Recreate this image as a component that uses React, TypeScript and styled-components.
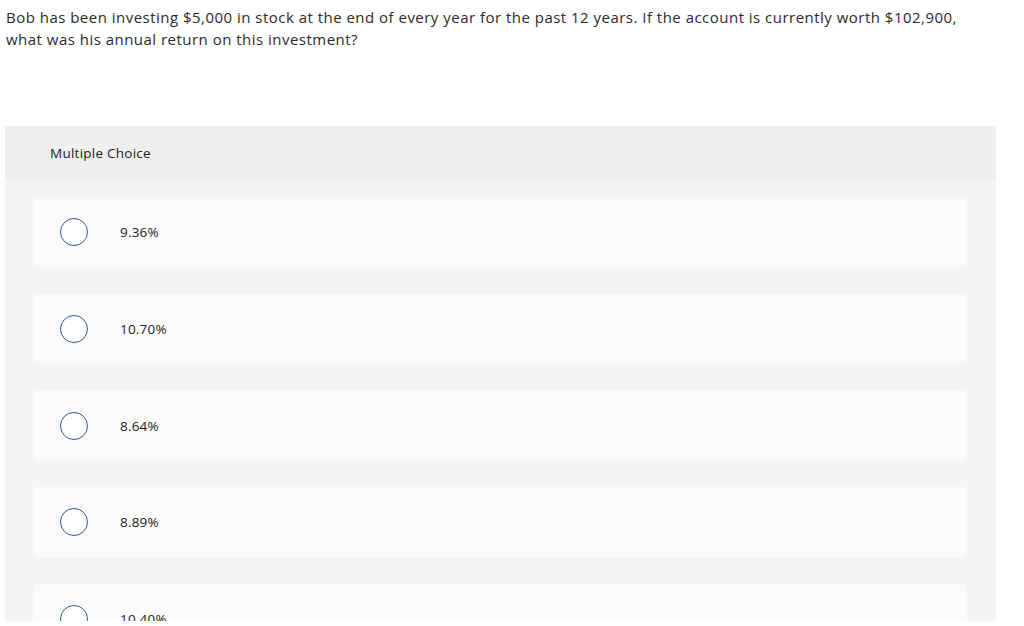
import React from "react";
import styled, { createGlobalStyle } from "styled-components";

const Global = createGlobalStyle`
  html, body { margin: 0; padding: 0; background: #fff; }
  body { font-family: "Open Sans", "Lato", sans-serif; color: #333; }
`;

const Page = styled.div`
  height: 621px;
  overflow: hidden;
  padding: 0 28px 0 5px;
`;

const Question = styled.p`
  margin: 0;
  max-width: 975px;
  padding: 6px 0 0 1px;
  font-size: 15px;
  line-height: 22px;
  letter-spacing: 0.48px;
  color: #2b2b2b;
`;

const Panel = styled.section`
  margin-top: 76px;
  background: #f4f4f4;
  border-radius: 3px 3px 0 0;
  padding-bottom: 20px;
`;

const Header = styled.div`
  height: 54px;
  display: flex;
  align-items: center;
  padding-left: 45px;
  background: #efefef;
  border-radius: 3px 3px 0 0;
  font-size: 13.5px;
  letter-spacing: 0.25px;
  color: #222;
`;

const List = styled.div`
  display: flex;
  flex-direction: column;
  gap: 26.2px;
  padding: 17px 29px 0 28px;
`;

const Row = styled.label`
  height: 70.5px;
  display: flex;
  align-items: center;
  background: #fafafa;
  border-radius: 4px;
  padding-left: 27px;
  cursor: pointer;
`;

const Radio = styled.span`
  width: 26px;
  height: 26px;
  border-radius: 50%;
  border: 1.5px solid #2d5d94;
  background: #fff;
  flex: none;
`;

const Label = styled.span`
  margin-left: 32px;
  font-size: 13.5px;
  letter-spacing: 0.2px;
  color: #222;
`;

const choices = ["9.36%", "10.70%", "8.64%", "8.89%", "10.40%"];

export default function App() {
  return (
    <>
      <Global />
      <Page>
        <Question>
          Bob has been investing $5,000 in stock at the end of every year for the past 12 years. If the account is currently worth $102,900, what was his annual return on this investment?
        </Question>
        <Panel>
          <Header>Multiple Choice</Header>
          <List>
            {choices.map((c) => (
              <Row key={c}>
                <Radio />
                <Label>{c}</Label>
              </Row>
            ))}
          </List>
        </Panel>
      </Page>
    </>
  );
}
